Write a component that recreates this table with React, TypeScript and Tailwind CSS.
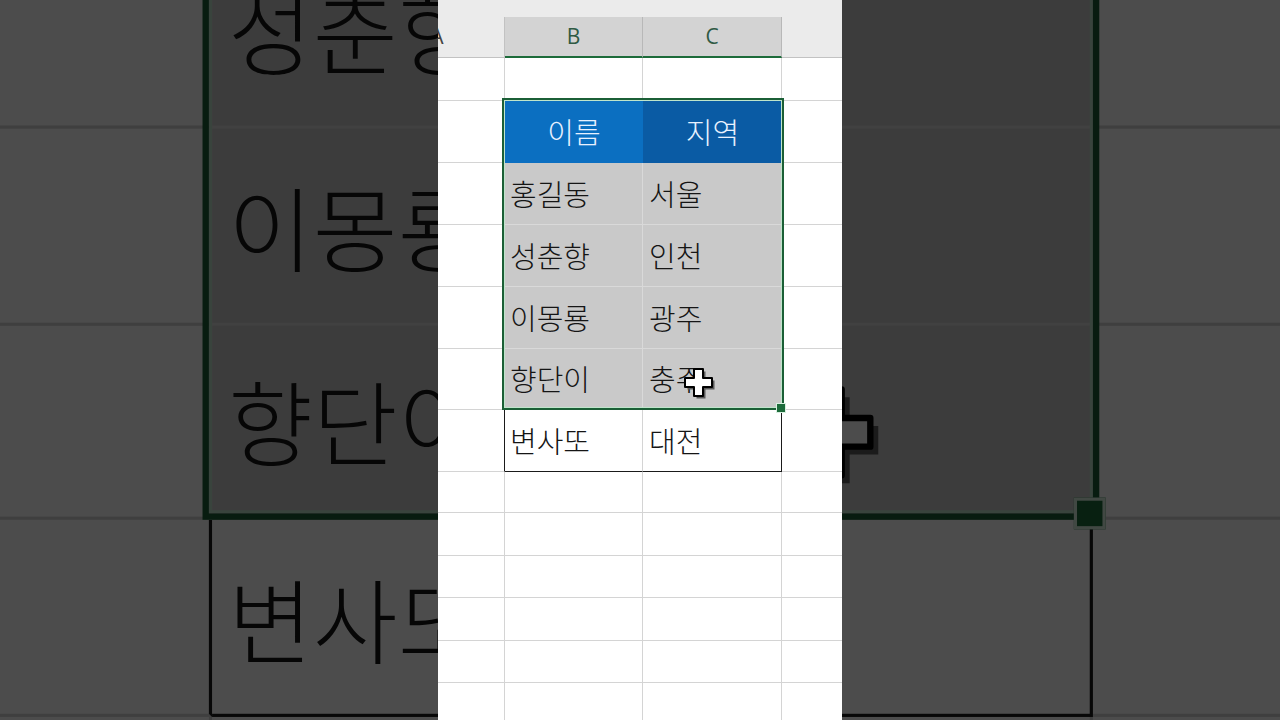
import { Fragment } from "react";

const kr = "font-['Noto_Sans_CJK_KR','Noto_Sans',sans-serif]";

const people = [
  { name: "홍길동", city: "서울", h: "h-[62px]" },
  { name: "성춘향", city: "인천", h: "h-[62px]" },
  { name: "이몽룡", city: "광주", h: "h-[62px]" },
  { name: "향단이", city: "충주", h: "h-[61px]" },
];

function Cursor() {
  return (
    <svg
      viewBox="0 0 32 33"
      className="absolute left-[40px] top-[18px] h-[33px] w-[32px]"
    >
      <path
        d="M12 3h9v9h9v9h-9v9h-9v-9H3v-9h9z"
        fill="#5a5a5a"
        transform="translate(1.5 1.5)"
      />
      <path
        d="M11 2h9v9h9v9h-9v9h-9v-9H2v-9h9z"
        fill="#fff"
        stroke="#000"
        strokeWidth="2"
        strokeLinejoin="round"
      />
    </svg>
  );
}

function BlankRow({ h }: { h: string }) {
  return (
    <div className={`flex ${h}`}>
      <div className="w-[135px] shrink-0 border-r border-b border-[#d4d4d4]" />
      <div className="w-[138px] shrink-0 border-r border-b border-[#d4d4d4]" />
      <div className="w-[139px] shrink-0 border-r border-b border-[#d4d4d4]" />
      <div className="w-[100px] shrink-0 border-b border-[#d4d4d4]" />
    </div>
  );
}

function Sheet() {
  return (
    <div className={`h-[720px] w-[404px] overflow-hidden bg-white font-light ${kr}`}>
      <div className="-ml-[68px] flex w-[512px] flex-col">
        {/* column letters */}
        <div className="h-[17px] bg-[#ebebeb]" />
        <div className="flex h-[41px] font-['Open_Sans',sans-serif] text-[21px] font-normal">
          <div className="flex w-[135px] shrink-0 items-center justify-center border-r border-b border-[#c2c2c2] bg-[#ebebeb] text-[#444]">
            A
          </div>
          <div className="flex w-[138px] shrink-0 items-center justify-center border-r border-b-2 border-r-[#b8b8b8] border-b-[#1d6b3a] bg-[#d3d3d3] text-[#2f5a43]">
            B
          </div>
          <div className="flex w-[139px] shrink-0 items-center justify-center border-r border-b-2 border-r-[#b8b8b8] border-b-[#1d6b3a] bg-[#d3d3d3] text-[#2f5a43]">
            C
          </div>
          <div className="w-[100px] shrink-0 border-b border-[#c2c2c2] bg-[#ebebeb]" />
        </div>

        <BlankRow h="h-[43px]" />

        {/* selected table block */}
        <div className="relative">
          <div className="flex h-[62px] text-[29px]">
            <div className="w-[135px] shrink-0 border-r border-b border-[#d4d4d4]" />
            <div className="flex w-[138px] shrink-0 items-center justify-center bg-[#0b6fc1] text-[#e8f1ff]">
              이름
            </div>
            <div className="flex w-[139px] shrink-0 items-center justify-center bg-[#0a5ba4] text-[#e8f1ff]">
              지역
            </div>
            <div className="w-[100px] shrink-0 border-b border-[#d4d4d4]" />
          </div>
          {people.map((p) => (
            <Fragment key={p.name}>
              <div className={`flex ${p.h} text-[29px] text-[#151515]`}>
                <div className="w-[135px] shrink-0 border-r border-b border-[#d4d4d4]" />
                <div className="flex w-[138px] shrink-0 items-center border-r border-b border-[#d9d9d9] bg-[#c9c9c9] pl-[5px]">
                  {p.name}
                </div>
                <div className="relative flex w-[139px] shrink-0 items-center border-b border-[#d9d9d9] bg-[#c9c9c9] pl-[6px]">
                  {p.city}
                  {p.city === "충주" && <Cursor />}
                </div>
                <div className="w-[100px] shrink-0 border-b border-[#d4d4d4]" />
              </div>
            </Fragment>
          ))}
          {/* selection frame */}
          <div className="pointer-events-none absolute -top-[3px] left-[132px] h-[312px] w-[282px] border-2 border-[#1b5f36] shadow-[inset_0_0_0_1px_#bfe5cb]">
            <div className="absolute -right-[4px] -bottom-[5px] h-[10px] w-[10px] border border-[#d9f0e0] bg-[#1d6b3b]" />
          </div>
        </div>

        <div className="flex h-[62px] text-[29px] text-[#151515]">
          <div className="w-[135px] shrink-0 border-r border-b border-r-[#1a1a1a] border-b-[#d4d4d4]" />
          <div className="flex w-[138px] shrink-0 items-center border-r border-b border-r-[#d4d4d4] border-b-[#1a1a1a] pl-[5px]">
            변사또
          </div>
          <div className="flex w-[139px] shrink-0 items-center border-r border-b border-[#1a1a1a] pl-[6px]">
            대전
          </div>
          <div className="w-[100px] shrink-0 border-b border-[#d4d4d4]" />
        </div>

        <BlankRow h="h-[41px]" />
        <BlankRow h="h-[43px]" />
        <BlankRow h="h-[42px]" />
        <BlankRow h="h-[43px]" />
        <BlankRow h="h-[42px]" />
        <BlankRow h="h-[42px]" />
      </div>
    </div>
  );
}

export default function App() {
  return (
    <div className="relative flex h-[720px] w-[1280px] justify-center overflow-hidden bg-[#4d4d4d]">
      {/* zoomed, dimmed copy behind the vertical frame */}
      <div
        aria-hidden
        className="absolute -left-px top-0 origin-top-left -translate-y-[784px] scale-[3.18]"
      >
        <Sheet />
      </div>
      <div className="absolute inset-0 bg-black/70" />
      <div className="relative">
        <Sheet />
      </div>
    </div>
  );
}
